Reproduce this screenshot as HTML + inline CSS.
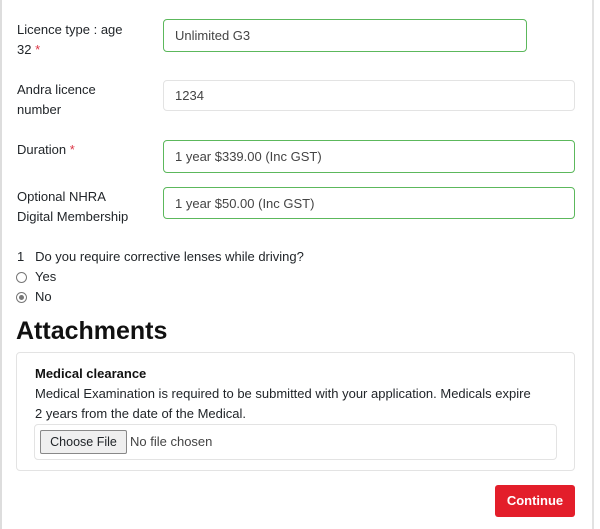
<!DOCTYPE html>
<html><head><style>
body{margin:0;width:600px;height:529px;background:#fff;font-family:"Liberation Sans",sans-serif;font-size:13px;color:#212529;position:relative;overflow:hidden}
.a{position:absolute}
.l{left:17px;line-height:20px}
.in{position:absolute;box-sizing:border-box;border:1.5px solid #5cb85c;border-radius:4px;padding-left:11px;display:flex;align-items:center;color:#444}
.r{color:#dc3545}
</style></head><body>
<div class="a" style="left:0;top:0;width:2px;height:529px;background:#ddd"></div>
<div class="a" style="left:592px;top:0;width:2px;height:529px;background:#e2e2e2"></div>
<div class="a l" style="top:20px">Licence type : age<br>32 <span class="r">*</span></div>
<div class="in" style="left:163px;top:19px;width:364px;height:33px">Unlimited G3</div>
<div class="a l" style="top:80px">Andra licence<br>number</div>
<div class="in" style="left:163px;top:80px;width:412px;height:31px;border:1px solid #e3e3e3">1234</div>
<div class="a l" style="top:140px">Duration <span class="r">*</span></div>
<div class="in" style="left:163px;top:140px;width:412px;height:33px">1 year $339.00 (Inc GST)</div>
<div class="a l" style="top:187px">Optional NHRA<br>Digital Membership</div>
<div class="in" style="left:163px;top:187px;width:412px;height:32px">1 year $50.00 (Inc GST)</div>
<div class="a l" style="top:247px">1&nbsp;&nbsp;&nbsp;Do you require corrective lenses while driving?</div>
<div class="a" style="left:16px;top:272px;width:9px;height:9px;border:1px solid #777;border-radius:50%"></div>
<div class="a" style="left:35px;top:267px;line-height:20px">Yes</div>
<div class="a" style="left:16px;top:292px;width:9px;height:9px;border:1px solid #777;border-radius:50%;background:#fff"><div style="margin:2px;width:5px;height:5px;border-radius:50%;background:#777"></div></div>
<div class="a" style="left:35px;top:287px;line-height:20px">No</div>
<div class="a" style="left:16px;top:314px;font-size:25px;font-weight:bold;color:#111;line-height:34px">Attachments</div>
<div class="a" style="left:16px;top:352px;width:559px;height:119px;box-sizing:border-box;border:1px solid #e3e3e3;border-radius:4px"></div>
<div class="a" style="left:35px;top:364px;font-weight:bold;line-height:20px;color:#111">Medical clearance</div>
<div class="a" style="left:35px;top:384px;line-height:20px;width:500px">Medical Examination is required to be submitted with your application. Medicals expire 2 years from the date of the Medical.</div>
<div class="a" style="left:34px;top:424px;width:523px;height:36px;box-sizing:border-box;border:1px solid #e3e3e3;border-radius:4px"></div>
<div class="a" style="left:40px;top:430px;width:87px;height:24px;box-sizing:border-box;border:1px solid #888;background:#efefef;border-radius:2px;text-align:center;line-height:22px;white-space:nowrap;font-size:12.5px">Choose File</div>
<div class="a" style="left:130px;top:432px;line-height:20px;color:#444;white-space:nowrap">No file chosen</div>
<div class="a" style="left:495px;top:485px;width:80px;height:32px;background:#e31e2a;border-radius:3px;color:#fff;font-weight:bold;text-align:center;line-height:32px">Continue</div>
</body></html>
